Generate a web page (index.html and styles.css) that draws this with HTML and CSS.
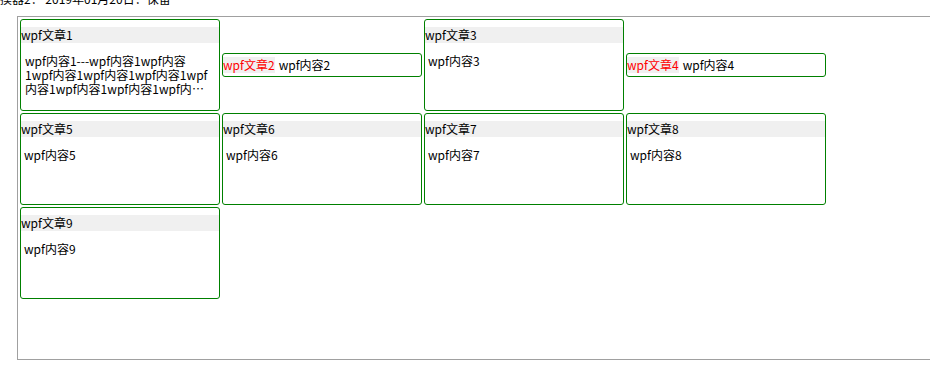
FILE: index.html
```html
<!DOCTYPE html>
<html lang="zh-CN">
<head>
    <meta charset="UTF-8">
    <meta name="viewport" content="width=device-width, initial-scale=1.0">
    <title>wpf文章列表</title>
    <link rel="stylesheet" href="styles.css">
</head>
<body>
    <div class="status">摸器2：&nbsp;2019年01月20日：保留</div>
    <div class="panel">
        <div class="card">
            <div class="card-title">wpf文章1</div>
            <div class="card-body clamp">wpf内容1---wpf内容1wpf内容1wpf内容1wpf内容1wpf内容1wpf内容1wpf内容1wpf内容1wpf内容1wpf内容1wpf内容1wpf内容1wpf内容1</div>
        </div>
        <div class="card small">
            <div class="card-title">wpf文章2</div>
            <div class="card-body">wpf内容2</div>
        </div>
        <div class="card">
            <div class="card-title">wpf文章3</div>
            <div class="card-body">wpf内容3</div>
        </div>
        <div class="card small">
            <div class="card-title">wpf文章4</div>
            <div class="card-body">wpf内容4</div>
        </div>
        <div class="card">
            <div class="card-title">wpf文章5</div>
            <div class="card-body">wpf内容5</div>
        </div>
        <div class="card">
            <div class="card-title">wpf文章6</div>
            <div class="card-body">wpf内容6</div>
        </div>
        <div class="card">
            <div class="card-title">wpf文章7</div>
            <div class="card-body">wpf内容7</div>
        </div>
        <div class="card">
            <div class="card-title">wpf文章8</div>
            <div class="card-body">wpf内容8</div>
        </div>
        <div class="card">
            <div class="card-title">wpf文章9</div>
            <div class="card-body">wpf内容9</div>
        </div>
    </div>
</body>
</html>
```

FILE: styles.css
```css
html, body {
    margin: 0;
    overflow: hidden;
    background: #fff;
}

body {
    font-family: "Microsoft YaHei", "Noto Sans CJK SC", sans-serif;
    font-size: 12px;
    color: #000;
}

.status {
    height: 16px;
    line-height: 16px;
    margin-top: -9px;
    margin-left: 0;
    white-space: nowrap;
}

.panel {
    margin: 9px 0 0 17px;
    width: 940px;
    height: 340px;
    padding: 1px;
    border: 1px solid #a0a0a0;
    display: flex;
    flex-wrap: wrap;
    align-content: flex-start;
    align-items: center;
}

.card {
    box-sizing: border-box;
    width: 200px;
    height: 92px;
    margin: 1px;
    border: 1px solid #008000;
    border-radius: 3px;
    overflow: hidden;
}

.card-title {
    margin-top: 7px;
    height: 16px;
    line-height: 16px;
    background: #f0f0f0;
    white-space: nowrap;
}

.card-body {
    margin-top: 11px;
    padding: 0 3px 0 3px;
    line-height: 14px;
}

.clamp {
    padding: 0 7px 0 4px;
    max-height: 42px;
    display: -webkit-box;
    -webkit-box-orient: vertical;
    -webkit-line-clamp: 3;
    overflow: hidden;
}

.card.small {
    height: 24px;
    display: flex;
    align-items: center;
}

.small .card-title {
    margin-top: 0;
    color: #ff0000;
}

.small .card-body {
    margin-top: 0;
    padding: 0 0 0 4px;
}
```
